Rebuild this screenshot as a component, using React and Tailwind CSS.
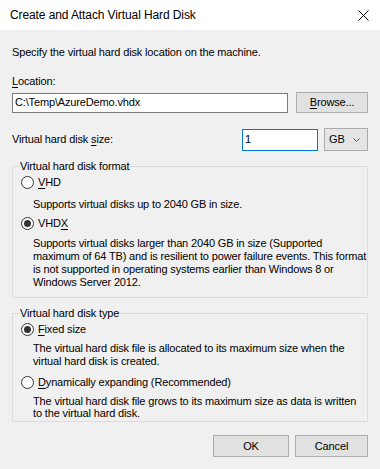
import React from "react";

function Radio({ checked }) {
  return (
    <span className="w-[13px] h-[13px] rounded-full border border-[#333] bg-white flex items-center justify-center shrink-0">
      {checked && <span className="w-[7px] h-[7px] rounded-full bg-[#333]" />}
    </span>
  );
}

function U({ children }) {
  return <span className="underline underline-offset-[2px]">{children}</span>;
}

export default function App() {
  return (
    <div className="w-[380px] h-[469px] bg-[#f0f0f0] font-['Liberation_Sans',sans-serif] text-[11px] tracking-[-0.15px] text-black overflow-hidden whitespace-nowrap">
      {/* title bar */}
      <div className="h-[30px] bg-white flex items-center justify-between pl-[10px] pr-[11px]">
        <span className="leading-[15px] text-[12px] tracking-[-0.1px]">Create and Attach Virtual Hard Disk</span>
        <svg width="11" height="11" viewBox="0 0 11 11" className="text-black">
          <path d="M0.5 0.5 L10.5 10.5 M10.5 0.5 L0.5 10.5" stroke="currentColor" strokeWidth="1" />
        </svg>
      </div>

      <div className="px-[12px]">
        <p className="mt-[15px] leading-[15px]">Specify the virtual hard disk location on the machine.</p>
        <p className="mt-[14px] leading-[15px]">
          <U>L</U>ocation:
        </p>

        <div className="mt-[3px] flex items-center">
          <div className="w-[276px] h-[20px] bg-white border border-[#7a7a7a] flex items-center pl-[2px] leading-[15px]">
            C:\Temp\AzureDemo.vhdx
          </div>
          <button className="ml-[8px] w-[72px] h-[21px] bg-[#e1e1e1] border border-[#adadad] leading-[15px]">
            <U>B</U>rowse...
          </button>
        </div>

        <div className="mt-[15px] flex items-center">
          <span className="flex-1 leading-[15px]">
            Virtual hard disk <U>s</U>ize:
          </span>
          <div className="w-[76px] h-[22px] bg-white border border-[#0078d7] flex items-center pl-[2px] leading-[15px]">
            1
          </div>
          <div className="ml-[6px] w-[44px] h-[23px] bg-[#e5e5e5] border border-[#acacac] flex items-center justify-between pl-[4px] pr-[7px] leading-[15px]">
            <span>GB</span>
            <svg width="7" height="4" viewBox="0 0 7 4">
              <path d="M0.5 0.5 L3.5 3.5 L6.5 0.5" stroke="#555" strokeWidth="1" fill="none" />
            </svg>
          </div>
        </div>

        {/* format group */}
        <fieldset className="mt-[8px] border border-[#dcdcdc] pl-[6px] pb-[8px]">
          <legend className="px-[1px] leading-[15px]">Virtual hard disk format</legend>
          <div className="mt-[1px] ml-[2px] flex items-center gap-[4px] leading-[15px]">
            <Radio />
            <span>
              <U>V</U>HD
            </span>
          </div>
          <p className="mt-[7px] ml-[14px] leading-[15px]">Supports virtual disks up to 2040 GB in size.</p>
          <div className="mt-[4px] ml-[2px] flex items-center gap-[4px] leading-[15px]">
            <Radio checked />
            <span>
              VHD<U>X</U>
            </span>
          </div>
          <p className="mt-[6px] ml-[14px] leading-[13px]">
            Supports virtual disks larger than 2040 GB in size (Supported
            <br />
            maximum of 64 TB) and is resilient to power failure events. This format
            <br />
            is not supported in operating systems earlier than Windows 8 or
            <br />
            Windows Server 2012.
          </p>
        </fieldset>

        {/* type group */}
        <fieldset className="mt-[8px] border border-[#dcdcdc] pl-[6px] pb-[2px]">
          <legend className="px-[1px] leading-[15px]">Virtual hard disk type</legend>
          <div className="mt-[1px] ml-[2px] flex items-center gap-[4px] leading-[15px]">
            <Radio checked />
            <span>
              <U>F</U>ixed size
            </span>
          </div>
          <p className="mt-[5px] ml-[14px] leading-[13px]">
            The virtual hard disk file is allocated to its maximum size when the
            <br />
            virtual hard disk is created.
          </p>
          <div className="mt-[7px] ml-[2px] flex items-center gap-[4px] leading-[15px]">
            <Radio />
            <span>
              <U>D</U>ynamically expanding (Recommended)
            </span>
          </div>
          <p className="mt-[5px] ml-[14px] leading-[12px]">
            The virtual hard disk file grows to its maximum size as data is written
            <br />
            to the virtual hard disk.
          </p>
        </fieldset>

        <div className="mt-[13px] flex justify-end gap-[6px]">
          <button className="w-[76px] h-[22px] bg-[#e1e1e1] border border-[#adadad] leading-[15px]">OK</button>
          <button className="w-[73px] h-[22px] bg-[#e1e1e1] border border-[#adadad] leading-[15px]">Cancel</button>
        </div>
      </div>
    </div>
  );
}
